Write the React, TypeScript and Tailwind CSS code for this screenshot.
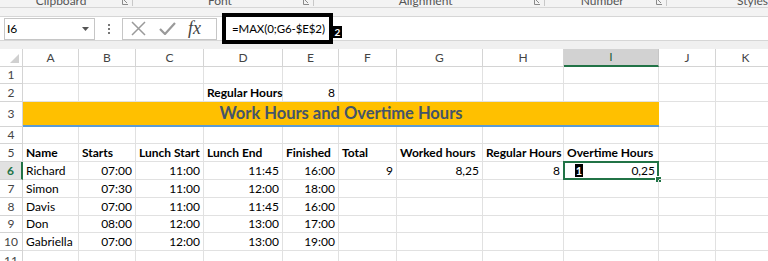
import { FunctionComponent } from 'react'

type Align = 'l' | 'r'
interface CellData {
  text: string
  align?: Align
  bold?: boolean
}

const colLetters = ['A', 'B', 'C', 'D', 'E', 'F', 'G', 'H', 'I', 'J', 'K']

const font = { fontFamily: 'Lato, "Liberation Sans", sans-serif' }

const rows: (CellData | null)[][] = [
  [],
  [null, null, null, { text: 'Regular Hours', bold: true }, { text: '8', align: 'r' }],
  [],
  [],
  [
    { text: 'Name', bold: true },
    { text: 'Starts', bold: true },
    { text: 'Lunch Start', bold: true },
    { text: 'Lunch End', bold: true },
    { text: 'Finished', bold: true },
    { text: 'Total', bold: true },
    { text: 'Worked hours', bold: true },
    { text: 'Regular Hours', bold: true },
    { text: 'Overtime Hours', bold: true },
  ],
  [
    { text: 'Richard' },
    { text: '07:00', align: 'r' },
    { text: '11:00', align: 'r' },
    { text: '11:45', align: 'r' },
    { text: '16:00', align: 'r' },
    { text: '9', align: 'r' },
    { text: '8,25', align: 'r' },
    { text: '8', align: 'r' },
    { text: '0,25', align: 'r' },
  ],
  [
    { text: 'Simon' },
    { text: '07:30', align: 'r' },
    { text: '11:00', align: 'r' },
    { text: '12:00', align: 'r' },
    { text: '18:00', align: 'r' },
  ],
  [
    { text: 'Davis' },
    { text: '07:00', align: 'r' },
    { text: '11:00', align: 'r' },
    { text: '11:45', align: 'r' },
    { text: '16:00', align: 'r' },
  ],
  [
    { text: 'Don' },
    { text: '08:00', align: 'r' },
    { text: '12:00', align: 'r' },
    { text: '13:00', align: 'r' },
    { text: '17:00', align: 'r' },
  ],
  [
    { text: 'Gabriella' },
    { text: '07:00', align: 'r' },
    { text: '12:00', align: 'r' },
    { text: '13:00', align: 'r' },
    { text: '19:00', align: 'r' },
  ],
  [],
]

const Launcher = () => (
  <svg width="6" height="6" viewBox="0 0 6 6" className="mt-[-1px]">
    <path d="M0.5 0 V5.5 H6" stroke="#8a8a8a" strokeWidth="1" fill="none" />
    <path d="M2 1 L5 4" stroke="#8a8a8a" strokeWidth="1" />
  </svg>
)

const RibbonGroup: FunctionComponent<{ label: string; width: string; launcher?: boolean }> = ({ label, width, launcher = true }) => (
  <div className={`flex items-start h-full ${width}`}>
    <div className="flex-1 text-center text-[12px] leading-[12px] mt-[-5px] text-[#555] whitespace-nowrap">{label}</div>
    {launcher && (
      <div className="flex items-start h-full">
        <Launcher />
        <div className="ml-[4px] mr-[4px] w-px h-[6px] bg-[#c8c8c8]" />
      </div>
    )}
  </div>
)

const App: FunctionComponent = () => {
  return (
    <div className="w-[768px] h-[261px] overflow-hidden bg-white relative text-black" style={font}>
      {/* ribbon group labels */}
      <div className="h-[8px] bg-[#f3f3f3] border-b border-[#d6d6d6] flex overflow-hidden">
        <RibbonGroup label="Clipboard" width="w-[139px]" />
        <RibbonGroup label="Font" width="w-[183px]" />
        <RibbonGroup label="Alignment" width="w-[234px]" />
        <RibbonGroup label="Number" width="w-[124px]" />
        <div className="pl-[66px] text-[12px] leading-[12px] mt-[-5px] text-[#555]">Styles</div>
      </div>
      <div className="h-[9px] bg-[#f3f3f3] border-b border-[#d6d6d6]" />

      {/* formula bar */}
      <div className="h-[24px] bg-white border-b border-[#d6d6d6] flex items-center pl-[4px]">
        <div className="w-[91px] h-[22px] border border-[#c6c6c6] flex items-center justify-between pl-[2px] pr-[5px] text-[12px]">
          <span>I6</span>
          <svg width="7" height="4" viewBox="0 0 7 4">
            <path d="M0 0 H7 L3.5 4 Z" fill="#555" />
          </svg>
        </div>
        <div className="w-[27px] flex flex-col items-center gap-[2px]">
          <div className="w-[2px] h-[2px] bg-[#777]" />
          <div className="w-[2px] h-[2px] bg-[#777]" />
          <div className="w-[2px] h-[2px] bg-[#777]" />
        </div>
        <div className="w-[95px] h-[22px] border border-[#c6c6c6] flex items-center pl-[7px] gap-[12px]">
          <svg width="17" height="15" viewBox="0 0 17 15">
            <path d="M2 1 L15 14 M15 1 L2 14" stroke="#9a9a9a" strokeWidth="1.5" fill="none" />
          </svg>
          <svg width="17" height="13" viewBox="0 0 17 13">
            <path d="M1 7 L6 12 L16 1" stroke="#9a9a9a" strokeWidth="2.2" fill="none" />
          </svg>
          <span className="text-[18px] italic leading-none text-[#444] mt-[-2px]" style={{ fontFamily: '"Liberation Serif", serif' }}>
            fx
          </span>
        </div>
      </div>

      {/* annotation: formula with black frame */}
      <div className="absolute left-[222px] top-[13px] w-[111px] h-[31px] border-[4px] border-black bg-white flex items-center pl-[6px] text-[11.5px] tracking-[-0.1px] whitespace-nowrap">
        =MAX(0;G6-$E$2)
      </div>
      <div className="absolute left-[333px] top-[26px] w-[9px] h-[12px] bg-black text-white text-[10px] font-bold leading-[12px] text-center">2</div>

      <div className="h-[8px] bg-[#f0f0f0]" />

      {/* sheet */}
      <div className="grid grid-cols-[23px_56px_57px_68px_79px_56px_58px_86px_81px_95px_57px_60px] grid-rows-[18px_17px_18px_25px_17px_18px_18px_18px_18px_17px_18px_20px] text-[12px]">
        <div className="border-r border-b border-[#d4d4d4] bg-white relative">
          <svg width="9" height="9" viewBox="0 0 9 9" className="absolute right-[3px] bottom-[3px]">
            <path d="M9 0 V9 H0 Z" fill="#d0d0d0" />
          </svg>
        </div>
        {colLetters.map(l =>
          l === 'I' ? (
            <div key={l} className="bg-[#d2d2d2] border-r border-[#c6c6c6] border-b-2 border-b-[#217346] flex items-center justify-center text-[12px] text-[#1f5f3a]">
              {l}
            </div>
          ) : (
            <div key={l} className="bg-white border-r border-b border-[#d4d4d4] flex items-center justify-center text-[12px] text-[#444]">
              {l}
            </div>
          )
        )}

        {rows.map((row, r) => {
          const n = r + 1
          const selected = n === 6
          const header = (
            <div
              key={`h${n}`}
              className={
                selected
                  ? 'bg-[#e1e1e1] border-b border-[#d4d4d4] border-r-2 border-r-[#217346] flex items-center justify-center text-[12px] font-bold text-[#217346]'
                  : 'bg-white border-r border-b border-[#d4d4d4] flex items-center justify-center text-[12px] text-[#444]'
              }
            >
              {n}
            </div>
          )
          if (n === 3) {
            return [
              header,
              <div
                key="title"
                className="col-span-9 bg-[#ffc000] border-b-2 border-[#5b9bd5] flex items-center justify-center text-[16.5px] font-bold text-[#44546a]"
              >
                Work Hours and Overtime Hours
              </div>,
              <div key="3j" className="border-r border-b border-[#e1e1e1]" />,
              <div key="3k" className="border-r border-b border-[#e1e1e1]" />,
            ]
          }
          return [
            header,
            ...colLetters.map((l, c) => {
              const cell = row[c]
              const active = selected && l === 'I'
              return (
                <div
                  key={`${l}${n}`}
                  className={`relative border-r border-b border-[#e1e1e1] flex items-center whitespace-nowrap ${
                    cell?.align === 'r' ? 'justify-end pr-[3px]' : 'pl-[3px]'
                  } ${cell?.bold ? 'font-bold' : ''}`}
                >
                  {cell?.text}
                  {active && (
                    <>
                      <div className="absolute left-[-1px] top-[-1px] right-[-1px] bottom-[-1px] border-2 border-[#217346]" />
                      <div className="absolute right-[-4px] bottom-[-4px] w-[7px] h-[7px] bg-[#217346] border border-white" />
                      <div className="absolute left-[11px] top-[2px] w-[8px] h-[13px] bg-black text-white text-[11px] font-bold leading-[13px] text-center">
                        1
                      </div>
                    </>
                  )}
                </div>
              )
            }),
          ]
        })}
      </div>
    </div>
  )
}

export default App
